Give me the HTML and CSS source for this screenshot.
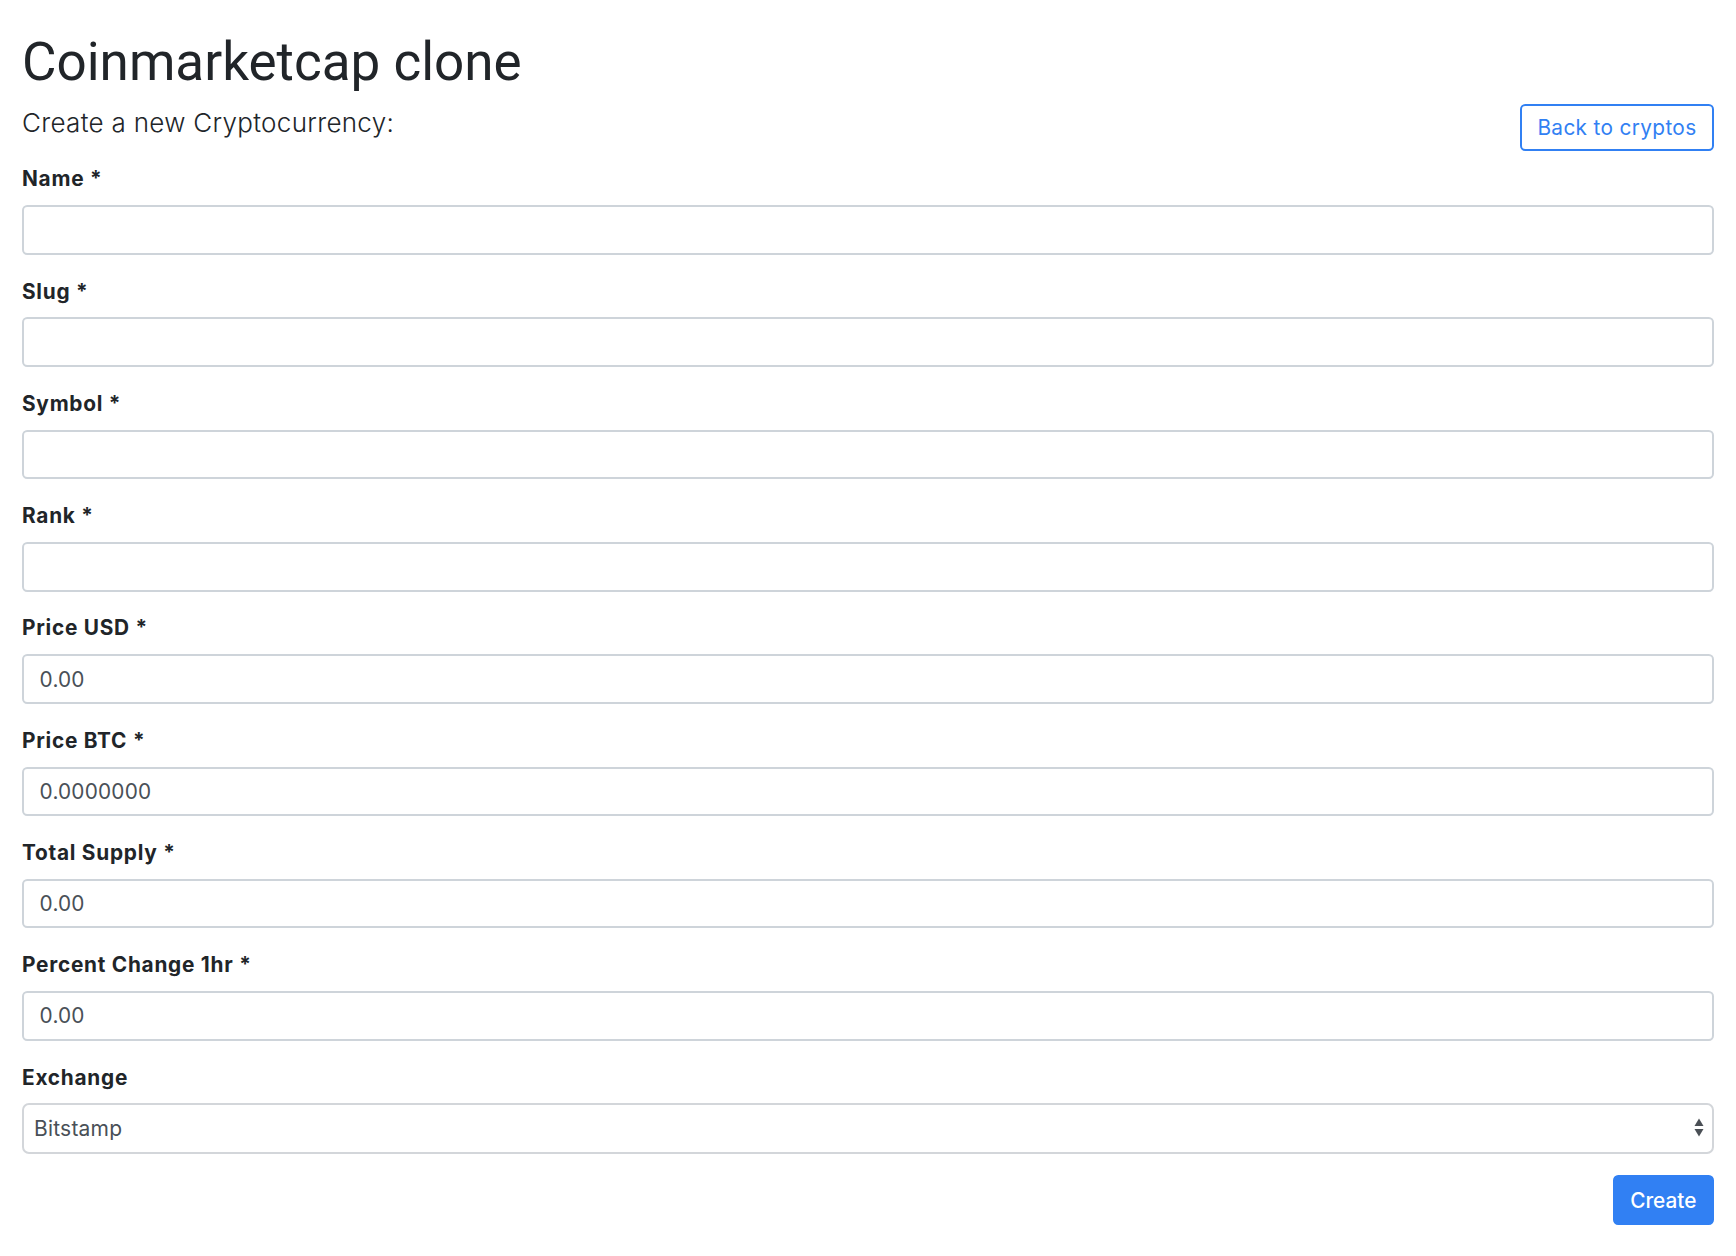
FILE: index.html
```html
<!DOCTYPE html>
<html lang="en">
<head>
<meta charset="utf-8">
<title>Coinmarketcap clone</title>
<link rel="stylesheet" href="styles.css">
</head>
<body>
<div class="page">
  <h1 class="title">Coinmarketcap clone</h1>
  <div class="header-row">
    <p class="lead">Create a new Cryptocurrency:</p>
    <a class="btn btn-outline">Back to cryptos</a>
  </div>
  <form class="form">
    <div class="form-group">
      <label class="label">Name *</label>
      <input class="control" type="text">
    </div>
    <div class="form-group">
      <label class="label">Slug *</label>
      <input class="control" type="text">
    </div>
    <div class="form-group">
      <label class="label">Symbol *</label>
      <input class="control" type="text">
    </div>
    <div class="form-group">
      <label class="label">Rank *</label>
      <input class="control" type="text">
    </div>
    <div class="form-group">
      <label class="label">Price USD *</label>
      <input class="control" type="text" value="0.00">
    </div>
    <div class="form-group">
      <label class="label">Price BTC *</label>
      <input class="control" type="text" value="0.0000000">
    </div>
    <div class="form-group">
      <label class="label">Total Supply *</label>
      <input class="control" type="text" value="0.00">
    </div>
    <div class="form-group">
      <label class="label">Percent Change 1hr *</label>
      <input class="control" type="text" value="0.00">
    </div>
    <div class="form-group">
      <label class="label">Exchange</label>
      <div class="select-wrap">
        <select class="select">
          <option>Bitstamp</option>
        </select>
        <svg class="select-arrows" width="10" height="20" viewBox="0 0 10 20">
          <path d="M5 0.5 L9.5 8 L0.5 8 Z" fill="#4a4f55"/>
          <path d="M0.5 11 L9.5 11 L5 18.5 Z" fill="#4a4f55"/>
        </svg>
      </div>
    </div>
    <div class="actions">
      <button type="button" class="btn btn-primary">Create</button>
    </div>
  </form>
</div>
</body>
</html>
```

FILE: styles.css
```css
html, body {
  margin: 0;
  padding: 0;
  background: #ffffff;
}

body {
  font-family: "Inter", "Liberation Sans", sans-serif;
  color: #212529;
}

.page {
  padding: 0 22px;
}

.title {
  font-family: "Roboto", "Liberation Sans", sans-serif;
  font-size: 53px;
  font-weight: 400;
  line-height: 62.4px;
  letter-spacing: 0;
  margin: 31px 0 10px 0;
  color: #212529;
}

.header-row {
  display: flex;
  justify-content: space-between;
  align-items: flex-start;
  margin-bottom: 12.5px;
}

.lead {
  font-family: "Inter", "Liberation Sans", sans-serif;
  font-size: 26px;
  font-weight: 300;
  line-height: 39px;
  letter-spacing: 0.3px;
  margin: 0;
  color: #212529;
}

.btn {
  display: inline-flex;
  align-items: center;
  justify-content: center;
  box-sizing: border-box;
  font-family: "Inter", "Liberation Sans", sans-serif;
  font-size: 20.8px;
  font-weight: 400;
  border-radius: 5.2px;
  cursor: pointer;
  text-decoration: none;
}

.btn-outline {
  margin-top: 1px;
  height: 46.4px;
  padding: 0 15.5px;
  border: 2px solid #3180f3;
  color: #3180f3;
  background: #ffffff;
  letter-spacing: 0.35px;
}

.form-group {
  margin-bottom: 20.9px;
}

.label {
  display: block;
  font-size: 20.8px;
  font-weight: 700;
  line-height: 31.3px;
  letter-spacing: 0.75px;
  margin-bottom: 10.5px;
  color: #212529;
}

.control {
  display: block;
  box-sizing: border-box;
  width: 100%;
  height: 49.6px;
  margin: 0;
  padding: 0 15.6px;
  border: 2px solid #ced4da;
  border-radius: 5.2px;
  font-family: "Inter", "Liberation Sans", sans-serif;
  font-size: 20.8px;
  letter-spacing: 0.2px;
  color: #495057;
  background: #ffffff;
  outline: none;
}

.select-wrap {
  position: relative;
}

.select {
  display: block;
  box-sizing: border-box;
  width: 100%;
  height: 51px;
  margin: 0;
  padding: 0 10px;
  border: 2px solid #d3d6da;
  border-radius: 7px;
  font-family: "Inter", "Liberation Sans", sans-serif;
  font-size: 21px;
  letter-spacing: 0.2px;
  color: #495057;
  background: #ffffff;
  -webkit-appearance: none;
  appearance: none;
  outline: none;
}

.select-arrows {
  position: absolute;
  right: 10px;
  top: 15px;
}

.actions {
  display: flex;
  justify-content: flex-end;
}

.btn-primary {
  height: 50px;
  padding: 0 15.6px;
  border: 2px solid #3180f3;
  background: #3180f3;
  color: #ffffff;
  font-weight: 500;
}
```
